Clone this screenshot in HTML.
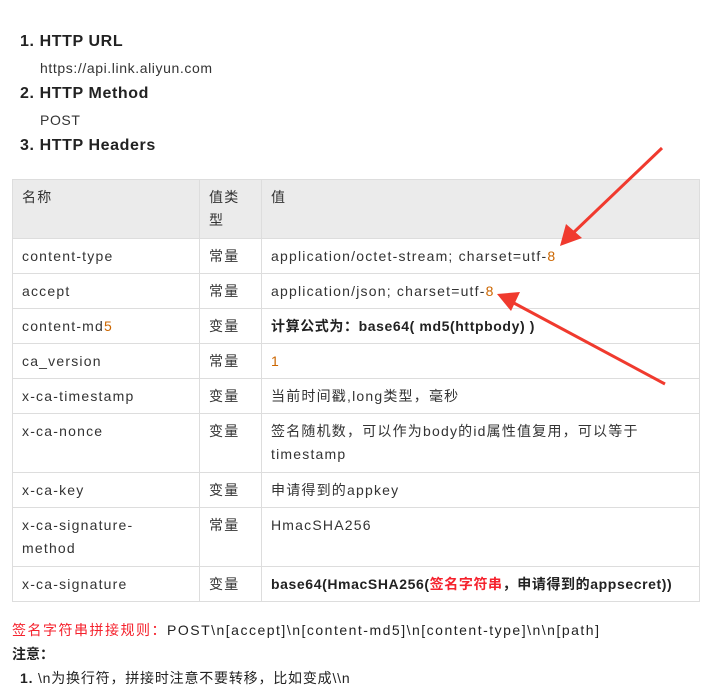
<!DOCTYPE html>
<html><head><meta charset="utf-8"><style>
body{margin:0;width:721px;height:689px;background:#fff;font-family:"Liberation Sans","Noto Sans CJK SC",sans-serif;color:#333;position:relative;overflow:hidden}
.a{position:absolute;white-space:nowrap}
table{position:absolute;left:12px;top:179px;border-collapse:collapse;font-size:14px;color:#333;letter-spacing:1.2px;table-layout:fixed}
td{border:1px solid #ddd;padding:0 9px;vertical-align:top;line-height:23px;white-space:nowrap}
tr.h td{background:#ebebeb}
b{color:#222}
.r{color:#f5222d}
.o{color:#c60}
.t{letter-spacing:1.2px}
</style></head><body>
<div class="a" style="left:20px;top:33px;font-size:16px;font-weight:bold;color:#222;letter-spacing:0.6px">1. HTTP URL</div>
<div class="a t" style="left:40px;top:60px;font-size:14px;letter-spacing:0.6px">https://api.link.aliyun.com</div>
<div class="a" style="left:20px;top:85px;font-size:16px;font-weight:bold;color:#222;letter-spacing:0.6px">2. HTTP Method</div>
<div class="a" style="left:40px;top:112px;font-size:14px;letter-spacing:0.6px">POST</div>
<div class="a" style="left:20px;top:137px;font-size:16px;font-weight:bold;color:#222;letter-spacing:0.6px">3. HTTP Headers</div>
<table>
<colgroup><col style="width:187px"><col style="width:62px"><col style="width:438px"></colgroup>
<tr class="h" style="height:59px"><td style="padding-top:6px">名称</td><td style="padding-top:6px">值类<br>型</td><td style="padding-top:6px">值</td></tr>
<tr style="height:35px"><td style="padding-top:6px">content-type</td><td style="padding-top:6px">常量</td><td style="padding-top:6px">application/octet-stream; charset=utf-<span class="o">8</span></td></tr>
<tr style="height:35px"><td style="padding-top:6px">accept</td><td style="padding-top:6px">常量</td><td style="padding-top:6px">application/json; charset=utf-<span class="o">8</span></td></tr>
<tr style="height:35px"><td style="padding-top:6px">content-md<span class="o">5</span></td><td style="padding-top:6px">变量</td><td style="padding-top:6px;letter-spacing:0.6px"><b>计算公式为：base64( md5(httpbody) )</b></td></tr>
<tr style="height:35px"><td style="padding-top:6px">ca_version</td><td style="padding-top:6px">常量</td><td style="padding-top:6px"><span class="o">1</span></td></tr>
<tr style="height:35px"><td style="padding-top:6px">x-ca-timestamp</td><td style="padding-top:6px">变量</td><td style="padding-top:6px">当前时间戳,long类型，毫秒</td></tr>
<tr style="height:59px"><td style="padding-top:6px">x-ca-nonce</td><td style="padding-top:6px">变量</td><td style="padding-top:6px">签名随机数，可以作为body的id属性值复用，可以等于<br>timestamp</td></tr>
<tr style="height:35px"><td style="padding-top:6px">x-ca-key</td><td style="padding-top:6px">变量</td><td style="padding-top:6px">申请得到的appkey</td></tr>
<tr style="height:59px"><td style="padding-top:6px">x-ca-signature-<br>method</td><td style="padding-top:6px">常量</td><td style="padding-top:6px">HmacSHA256</td></tr>
<tr style="height:35px"><td style="padding-top:6px">x-ca-signature</td><td style="padding-top:6px">变量</td><td style="padding-top:6px;letter-spacing:0.6px"><b>base64(HmacSHA256(<span class="r">签名字符串</span>，申请得到的appsecret))</b></td></tr>
</table>
<div class="a t" style="left:12px;top:620px;font-size:14px;color:#222;letter-spacing:1.5px"><span class="r">签名字符串拼接规则：</span>POST\n[accept]\n[content-md5]\n[content-type]\n\n[path]</div>
<div class="a" style="left:12px;top:644px;font-size:14px;font-weight:bold;color:#222">注意：</div>
<div class="a" style="left:20px;top:668px;font-size:14px;color:#222;letter-spacing:0.8px"><b>1.</b> \n为换行符，拼接时注意不要转移，比如变成\\n</div>
<svg class="a" style="left:0;top:0" width="721" height="689">
<line x1="662" y1="148" x2="572" y2="234" stroke="#f03a2e" stroke-width="3"/>
<polygon points="560,246 566,224 582,238" fill="#f03a2e"/>
<line x1="665" y1="384" x2="512" y2="302" stroke="#f03a2e" stroke-width="3"/>
<polygon points="497,294 520,292 511,311" fill="#f03a2e"/>
</svg>
</body></html>
